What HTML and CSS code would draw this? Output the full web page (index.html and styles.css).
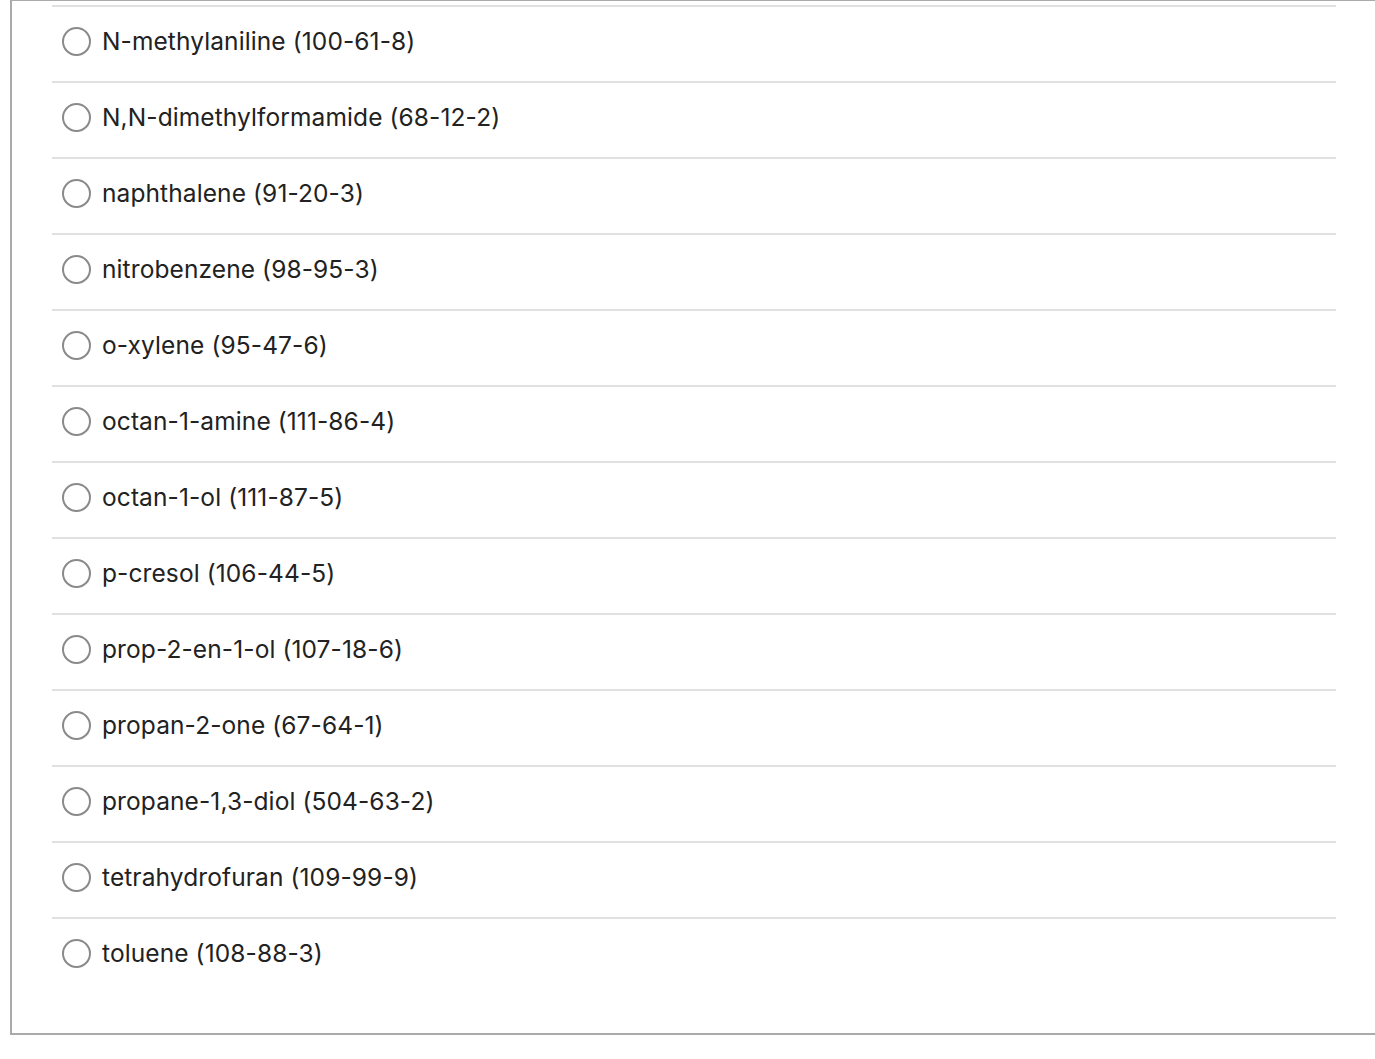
FILE: index.html
```html
<!DOCTYPE html>
<html lang="en">
<head>
  <meta charset="UTF-8">
  <meta name="viewport" content="width=device-width, initial-scale=1.0">
  <title>Choices</title>
  <link rel="stylesheet" href="styles.css">
</head>
<body>
  <div class="question">
    <ul class="choices">
      <li class="choice"><label><input type="radio" name="cmp"><span>N-methylaniline (100-61-8)</span></label></li>
      <li class="choice"><label><input type="radio" name="cmp"><span>N,N-dimethylformamide (68-12-2)</span></label></li>
      <li class="choice"><label><input type="radio" name="cmp"><span>naphthalene (91-20-3)</span></label></li>
      <li class="choice"><label><input type="radio" name="cmp"><span>nitrobenzene (98-95-3)</span></label></li>
      <li class="choice"><label><input type="radio" name="cmp"><span>o-xylene (95-47-6)</span></label></li>
      <li class="choice"><label><input type="radio" name="cmp"><span>octan-1-amine (111-86-4)</span></label></li>
      <li class="choice"><label><input type="radio" name="cmp"><span>octan-1-ol (111-87-5)</span></label></li>
      <li class="choice"><label><input type="radio" name="cmp"><span>p-cresol (106-44-5)</span></label></li>
      <li class="choice"><label><input type="radio" name="cmp"><span>prop-2-en-1-ol (107-18-6)</span></label></li>
      <li class="choice"><label><input type="radio" name="cmp"><span>propan-2-one (67-64-1)</span></label></li>
      <li class="choice"><label><input type="radio" name="cmp"><span>propane-1,3-diol (504-63-2)</span></label></li>
      <li class="choice"><label><input type="radio" name="cmp"><span>tetrahydrofuran (109-99-9)</span></label></li>
      <li class="choice"><label><input type="radio" name="cmp"><span>toluene (108-88-3)</span></label></li>
    </ul>
  </div>
</body>
</html>
```

FILE: styles.css
```css
body { margin: 0; background: #fff; font-family: Inter, 'Liberation Sans', sans-serif; color: #222; }
.question { margin-left: 10px; border-left: 2px solid #aaa; border-top: 1px solid #aaa; border-bottom: 2px solid #aaa; padding: 4px 0 40px 40px; }
.choices { list-style: none; margin: 0; padding: 0; width: 1284px; }
.choice { border-top: 2px solid #e0e0e0; height: 56px; padding: 18px 0 0 10px; }
.choice label { display: flex; align-items: center; gap: 11px; cursor: pointer; font-size: 24.5px; line-height: 32px; letter-spacing: 0.1px; }
.choice input { appearance: none; -webkit-appearance: none; margin: 0; width: 29px; height: 29px; border: 2px solid #8a8a8a; border-radius: 50%; box-sizing: border-box; flex: none; }
```
